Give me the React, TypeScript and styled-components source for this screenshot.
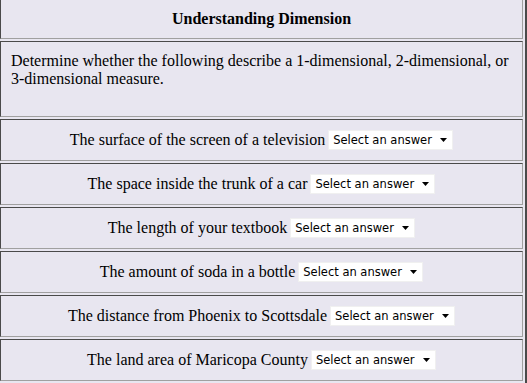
import styled, { createGlobalStyle } from "styled-components";

const GlobalStyle = createGlobalStyle`
  html, body {
    margin: 0;
    padding: 0;
    background: #e8e6f0;
  }
`;

const questions = [
  "The surface of the screen of a television",
  "The space inside the trunk of a car",
  "The length of your textbook",
  "The amount of soda in a bottle",
  "The distance from Phoenix to Scottsdale",
  "The land area of Maricopa County",
];

export default function App() {
  return (
    <>
      <GlobalStyle />
      <Viewport>
        <Table>
          <tbody>
            <tr>
              <HeadCell>Understanding Dimension</HeadCell>
            </tr>
            <tr>
              <IntroCell>
                Determine whether the following describe a 1-dimensional,
                2-dimensional, or 3-dimensional measure.
              </IntroCell>
            </tr>
            {questions.map((q) => (
              <tr key={q}>
                <QuestionCell>
                  {q}{" "}
                  <SelectBox>
                    <Select defaultValue="">
                      <option value="">Select an answer</option>
                      <option value="1">1-dimensional</option>
                      <option value="2">2-dimensional</option>
                      <option value="3">3-dimensional</option>
                    </Select>
                    <svg width="7" height="4" viewBox="0 0 7 4">
                      <path d="M0 0h7L3.5 4z" fill="#000" />
                    </svg>
                  </SelectBox>
                </QuestionCell>
              </tr>
            ))}
          </tbody>
        </Table>
      </Viewport>
    </>
  );
}

const Viewport = styled.div`
  width: 527px;
  height: 383px;
  overflow: hidden;
`;

const Table = styled.table`
  margin: -5px 0 0 -4px;
  width: 531px;
  border-collapse: separate;
  border-spacing: 2px;
  border-style: solid;
  border-width: 2px;
  border-color: #a0a0a0 #4a4a4a #4a4a4a #a0a0a0;
  background: #e8e6f0;
  font-family: "Liberation Serif", "Times New Roman", serif;
  font-size: 16px;
  color: #000;
`;

const Cell = styled.td`
  border-style: solid;
  border-width: 1px;
  border-color: #4a4a4a #a0a0a0 #a0a0a0 #4a4a4a;
  padding: 0;
`;

const HeadCell = styled(Cell).attrs({ as: "th" })`
  height: 40px;
  box-sizing: border-box;
  text-align: center;
  vertical-align: middle;
  font-weight: bold;
  font-size: 16px;
`;

const IntroCell = styled(Cell)`
  height: 76px;
  box-sizing: border-box;
  padding: 10px 10px 8px 10px;
  vertical-align: top;
  line-height: 18px;
  text-align: left;
`;

const QuestionCell = styled(Cell)`
  height: 42px;
  box-sizing: border-box;
  padding-top: 2px;
  text-align: center;
  vertical-align: middle;
`;

const SelectBox = styled.span`
  display: inline-flex;
  align-items: center;
  box-sizing: border-box;
  width: 125px;
  height: 20px;
  background: #fff;
  border: 1px solid #f0f0f0;
  padding: 0 5px 0 0;
  margin-left: -1px;
  vertical-align: middle;
  position: relative;
  top: -1px;
  font: 11.5px "DejaVu Sans", Tahoma, Verdana, sans-serif;
`;

const Select = styled.select`
  appearance: none;
  -webkit-appearance: none;
  flex: 1;
  min-width: 0;
  border: none;
  outline: none;
  background: transparent;
  margin: 0;
  padding: 0 0 0 4px;
  height: 18px;
  font: 11.5px "DejaVu Sans", Tahoma, Verdana, sans-serif;
  color: #000;
`;
